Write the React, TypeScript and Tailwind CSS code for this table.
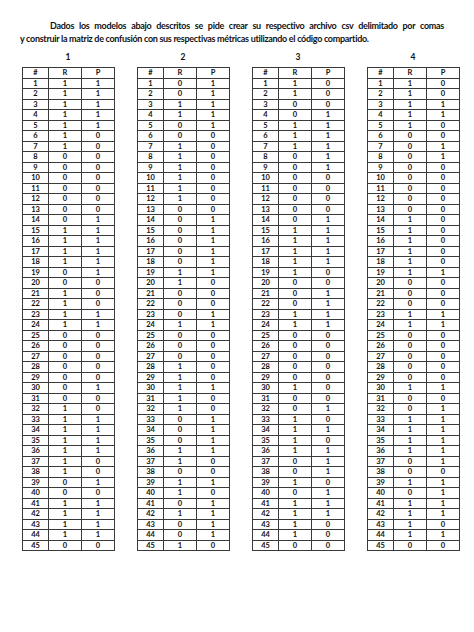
import * as React from "react"

// rows grouped by five, spaces are ignored
const modelos = [
  {
    r: "11111 11000 00001 11100 11110 00000 01111 11100 11110",
    p: "11111 00000 00011 11110 00110 00001 00111 10010 11110",
  },
  {
    r: "00110 01111 11000 00011 00010 00111 11000 11011 01001",
    p: "11111 00000 00011 11110 00110 00001 00111 10010 11110",
  },
  {
    r: "11001 11000 00001 11110 00110 00001 00111 10010 11110",
    p: "00011 11110 00011 11100 11110 00000 01010 11101 11000",
  },
  {
    r: "11111 00000 00011 11110 00110 00001 00111 10010 11110",
    p: "00110 01100 00000 00010 00110 00001 01111 11011 11010",
  },
]

function bits(s: string) {
  return s.replace(/\s+/g, "").split("")
}

function Tabla({ n, r, p }: { n: number; r: string; p: string }) {
  const rs = bits(r)
  const ps = bits(p)
  return (
    <div className="w-[92px]">
      <p className="h-[10px] text-center text-[8.5px] font-bold leading-[10px]">{n}</p>
      <table className="mt-[5px] w-[92px] table-fixed border-collapse text-center text-[7.5px] font-bold leading-none">
        <colgroup>
          <col className="w-[26px]" />
          <col className="w-[33px]" />
          <col className="w-[33px]" />
        </colgroup>
        <thead>
          <tr className="h-[10.5px]">
            <th className="border border-[#3a3a3a] p-0">#</th>
            <th className="border border-[#3a3a3a] p-0">R</th>
            <th className="border border-[#3a3a3a] p-0">P</th>
          </tr>
        </thead>
        <tbody>
          {rs.map((v, i) => (
            <tr key={i} className="h-[10.5px]">
              <td className="border border-[#3a3a3a] p-0">{i + 1}</td>
              <td className="border border-[#3a3a3a] p-0">{v}</td>
              <td className="border border-[#3a3a3a] p-0">{ps[i]}</td>
            </tr>
          ))}
        </tbody>
      </table>
    </div>
  )
}

export default function App() {
  return (
    <div className="h-[632px] w-[474px] bg-white font-['Lato','Open_Sans',sans-serif] text-[#111]">
      <div className="pt-[20px] pl-[20px] text-[9px] font-bold leading-[12.6px] tracking-[-0.3px]">
        <p className="w-[424px] pl-[30px] text-justify [text-align-last:justify]">
          Dados los modelos abajo descritos se pide crear su respectivo archivo csv delimitado por comas
        </p>
        <p>y construir la matriz de confusión con sus respectivas métricas utilizando el código compartido.</p>
      </div>
      <div className="mt-[7px] flex gap-[23px] pl-[22px]">
        {modelos.map((m, i) => (
          <Tabla key={i} n={i + 1} r={m.r} p={m.p} />
        ))}
      </div>
    </div>
  )
}
